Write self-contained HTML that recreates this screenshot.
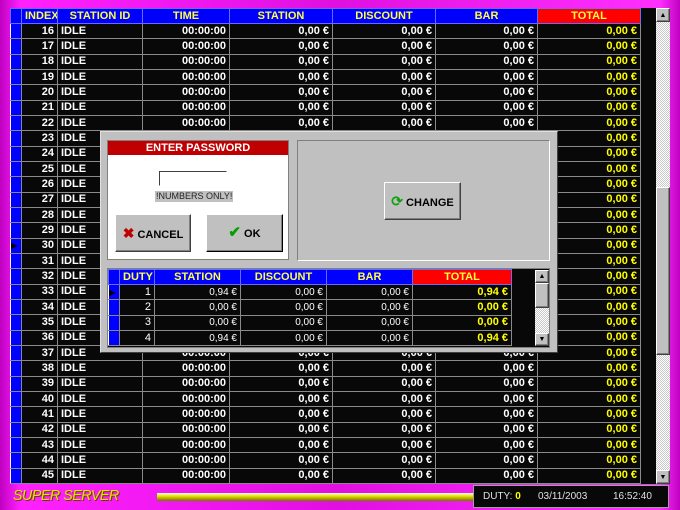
<!DOCTYPE html>
<html><head><meta charset="utf-8"><style>
*{margin:0;padding:0;box-sizing:border-box}
body{width:680px;height:510px;overflow:hidden;position:relative;font-family:"Liberation Sans",Arial,sans-serif;
background:linear-gradient(90deg,#c000c0,#ff20ff 3%,#e010e0 50%,#ff30ff 97%,#c000c0)}
#grid{position:absolute;left:10px;top:8px;width:646px;height:476px;background:#080808}
table{border-collapse:collapse;table-layout:fixed;position:absolute;left:0;top:0}
td{border:1px solid #8a8a8a;color:#fff;font-weight:bold;font-size:11px;text-align:right;padding:0 3px;height:15.33px;line-height:13px;white-space:nowrap;overflow:hidden}
tr.h td{background:#0000ff;color:#ffff40;text-align:center;height:15px;border-color:#6a6aff}
tr.h td.t{background:#ff0000}
td.i{background:#0000ff;border-color:#fff #888 #888 #fff;padding:0}
td.y{color:#ffff00}
td.l{text-align:left}
#sb{position:absolute;left:656px;top:8px;width:14px;height:476px;background:repeating-conic-gradient(#fff 0 25%,#c8c8c8 0 50%) 0 0/2px 2px}
.btn{position:absolute;background:#c0c0c0;border:1px solid;border-color:#fff #404040 #404040 #fff;box-shadow:inset -1px -1px #808080}
.arr{font-size:7px;text-align:center;line-height:13px;color:#000}
#dlg{position:absolute;left:100px;top:131px;width:458px;height:222px;background:#c0c0c0;border:1px solid;border-color:#e0e0e0 #404040 #404040 #e0e0e0}
#bot{position:absolute;left:0;top:484px;width:680px;height:26px}
</style></head><body>
<div id="grid">
<table style="width:630px">
<colgroup><col style="width:11px"><col style="width:36px"><col style="width:85px"><col style="width:87px"><col style="width:103px"><col style="width:103px"><col style="width:102px"><col style="width:103px"></colgroup>
<tr class="h"><td class="i" style="background:#0000ff"></td><td>INDEX</td><td>STATION ID</td><td>TIME</td><td>STATION</td><td>DISCOUNT</td><td>BAR</td><td class="t">TOTAL</td></tr>
<tr><td class="i"></td><td>16</td><td class="l">IDLE</td><td>00:00:00</td><td>0,00 €</td><td>0,00 €</td><td>0,00 €</td><td class="y">0,00 €</td></tr>
<tr><td class="i"></td><td>17</td><td class="l">IDLE</td><td>00:00:00</td><td>0,00 €</td><td>0,00 €</td><td>0,00 €</td><td class="y">0,00 €</td></tr>
<tr><td class="i"></td><td>18</td><td class="l">IDLE</td><td>00:00:00</td><td>0,00 €</td><td>0,00 €</td><td>0,00 €</td><td class="y">0,00 €</td></tr>
<tr><td class="i"></td><td>19</td><td class="l">IDLE</td><td>00:00:00</td><td>0,00 €</td><td>0,00 €</td><td>0,00 €</td><td class="y">0,00 €</td></tr>
<tr><td class="i"></td><td>20</td><td class="l">IDLE</td><td>00:00:00</td><td>0,00 €</td><td>0,00 €</td><td>0,00 €</td><td class="y">0,00 €</td></tr>
<tr><td class="i"></td><td>21</td><td class="l">IDLE</td><td>00:00:00</td><td>0,00 €</td><td>0,00 €</td><td>0,00 €</td><td class="y">0,00 €</td></tr>
<tr><td class="i"></td><td>22</td><td class="l">IDLE</td><td>00:00:00</td><td>0,00 €</td><td>0,00 €</td><td>0,00 €</td><td class="y">0,00 €</td></tr>
<tr><td class="i"></td><td>23</td><td class="l">IDLE</td><td>00:00:00</td><td>0,00 €</td><td>0,00 €</td><td>0,00 €</td><td class="y">0,00 €</td></tr>
<tr><td class="i"></td><td>24</td><td class="l">IDLE</td><td>00:00:00</td><td>0,00 €</td><td>0,00 €</td><td>0,00 €</td><td class="y">0,00 €</td></tr>
<tr><td class="i"></td><td>25</td><td class="l">IDLE</td><td>00:00:00</td><td>0,00 €</td><td>0,00 €</td><td>0,00 €</td><td class="y">0,00 €</td></tr>
<tr><td class="i"></td><td>26</td><td class="l">IDLE</td><td>00:00:00</td><td>0,00 €</td><td>0,00 €</td><td>0,00 €</td><td class="y">0,00 €</td></tr>
<tr><td class="i"></td><td>27</td><td class="l">IDLE</td><td>00:00:00</td><td>0,00 €</td><td>0,00 €</td><td>0,00 €</td><td class="y">0,00 €</td></tr>
<tr><td class="i"></td><td>28</td><td class="l">IDLE</td><td>00:00:00</td><td>0,00 €</td><td>0,00 €</td><td>0,00 €</td><td class="y">0,00 €</td></tr>
<tr><td class="i"></td><td>29</td><td class="l">IDLE</td><td>00:00:00</td><td>0,00 €</td><td>0,00 €</td><td>0,00 €</td><td class="y">0,00 €</td></tr>
<tr><td class="i" style="font-size:8px;color:#000;text-align:left">▶</td><td>30</td><td class="l">IDLE</td><td>00:00:00</td><td>0,00 €</td><td>0,00 €</td><td>0,00 €</td><td class="y">0,00 €</td></tr>
<tr><td class="i"></td><td>31</td><td class="l">IDLE</td><td>00:00:00</td><td>0,00 €</td><td>0,00 €</td><td>0,00 €</td><td class="y">0,00 €</td></tr>
<tr><td class="i"></td><td>32</td><td class="l">IDLE</td><td>00:00:00</td><td>0,00 €</td><td>0,00 €</td><td>0,00 €</td><td class="y">0,00 €</td></tr>
<tr><td class="i"></td><td>33</td><td class="l">IDLE</td><td>00:00:00</td><td>0,00 €</td><td>0,00 €</td><td>0,00 €</td><td class="y">0,00 €</td></tr>
<tr><td class="i"></td><td>34</td><td class="l">IDLE</td><td>00:00:00</td><td>0,00 €</td><td>0,00 €</td><td>0,00 €</td><td class="y">0,00 €</td></tr>
<tr><td class="i"></td><td>35</td><td class="l">IDLE</td><td>00:00:00</td><td>0,00 €</td><td>0,00 €</td><td>0,00 €</td><td class="y">0,00 €</td></tr>
<tr><td class="i"></td><td>36</td><td class="l">IDLE</td><td>00:00:00</td><td>0,00 €</td><td>0,00 €</td><td>0,00 €</td><td class="y">0,00 €</td></tr>
<tr><td class="i"></td><td>37</td><td class="l">IDLE</td><td>00:00:00</td><td>0,00 €</td><td>0,00 €</td><td>0,00 €</td><td class="y">0,00 €</td></tr>
<tr><td class="i"></td><td>38</td><td class="l">IDLE</td><td>00:00:00</td><td>0,00 €</td><td>0,00 €</td><td>0,00 €</td><td class="y">0,00 €</td></tr>
<tr><td class="i"></td><td>39</td><td class="l">IDLE</td><td>00:00:00</td><td>0,00 €</td><td>0,00 €</td><td>0,00 €</td><td class="y">0,00 €</td></tr>
<tr><td class="i"></td><td>40</td><td class="l">IDLE</td><td>00:00:00</td><td>0,00 €</td><td>0,00 €</td><td>0,00 €</td><td class="y">0,00 €</td></tr>
<tr><td class="i"></td><td>41</td><td class="l">IDLE</td><td>00:00:00</td><td>0,00 €</td><td>0,00 €</td><td>0,00 €</td><td class="y">0,00 €</td></tr>
<tr><td class="i"></td><td>42</td><td class="l">IDLE</td><td>00:00:00</td><td>0,00 €</td><td>0,00 €</td><td>0,00 €</td><td class="y">0,00 €</td></tr>
<tr><td class="i"></td><td>43</td><td class="l">IDLE</td><td>00:00:00</td><td>0,00 €</td><td>0,00 €</td><td>0,00 €</td><td class="y">0,00 €</td></tr>
<tr><td class="i"></td><td>44</td><td class="l">IDLE</td><td>00:00:00</td><td>0,00 €</td><td>0,00 €</td><td>0,00 €</td><td class="y">0,00 €</td></tr>
<tr><td class="i"></td><td>45</td><td class="l">IDLE</td><td>00:00:00</td><td>0,00 €</td><td>0,00 €</td><td>0,00 €</td><td class="y">0,00 €</td></tr>
</table>
</div>
<div id="sb">
<div class="btn arr" style="left:0;top:0;width:14px;height:14px">▲</div>
<div class="btn" style="left:0;top:179px;width:14px;height:168px"></div>
<div class="btn arr" style="left:0;top:462px;width:14px;height:14px">▼</div>
</div>

<div id="dlg">
 <div style="position:absolute;left:6px;top:8px;width:182px;height:120px;background:#fff;border:1px solid #808080">
  <div style="height:14px;background:#c00000;color:#fff;font-weight:bold;font-size:11px;text-align:center;line-height:14px">ENTER PASSWORD</div>
  <div style="position:absolute;left:51px;top:30px;width:68px;height:15px;border:1px solid;border-color:#404040 #fff #fff #404040;background:#fff"></div>
  <div style="position:absolute;left:47px;top:50px;background:#c0c0c0;font-size:9px;color:#222;padding:0 1px;line-height:11px">!NUMBERS ONLY!</div>
  <div class="btn" style="left:7px;top:73px;width:76px;height:38px;font-size:11px;font-weight:bold;line-height:36px;text-align:center"><span style="color:#c00000;font-size:14px">✖</span> CANCEL</div>
  <div class="btn" style="left:98px;top:73px;width:77px;height:38px;font-size:11px;font-weight:bold;line-height:36px;text-align:center;border-color:#fff #000 #000 #fff"><span style="color:#00a000;font-size:15px">✔</span> OK</div>
 </div>
 <div style="position:absolute;left:196px;top:8px;width:253px;height:121px;border:1px solid;border-color:#808080 #fff #fff #808080">
  <div class="btn" style="left:86px;top:41px;width:77px;height:38px;font-size:11px;font-weight:bold;line-height:36px;text-align:center"><span style="color:#10a010;font-size:14px">⟳</span> CHANGE</div>
 </div>
 <div style="position:absolute;left:6px;top:136px;width:443px;height:80px;background:#080808;border:1px solid #808080">
  <table style="width:403px">
  <colgroup><col style="width:11px"><col style="width:35px"><col style="width:86px"><col style="width:86px"><col style="width:86px"><col style="width:99px"></colgroup>
  <tr class="h"><td class="i" style="background:#0000ff"></td><td>DUTY</td><td>STATION</td><td>DISCOUNT</td><td>BAR</td><td class="t">TOTAL</td></tr>
  <tr><td class="i" style="font-size:8px;color:#000;text-align:left">▶</td><td style="font-weight:normal">1</td><td style="font-weight:normal;font-size:10px">0,94 €</td><td style="font-weight:normal;font-size:10px">0,00 €</td><td style="font-weight:normal;font-size:10px">0,00 €</td><td class="y">0,94 €</td></tr>
  <tr><td class="i"></td><td style="font-weight:normal">2</td><td style="font-weight:normal;font-size:10px">0,00 €</td><td style="font-weight:normal;font-size:10px">0,00 €</td><td style="font-weight:normal;font-size:10px">0,00 €</td><td class="y">0,00 €</td></tr>
  <tr><td class="i"></td><td style="font-weight:normal">3</td><td style="font-weight:normal;font-size:10px">0,00 €</td><td style="font-weight:normal;font-size:10px">0,00 €</td><td style="font-weight:normal;font-size:10px">0,00 €</td><td class="y">0,00 €</td></tr>
  <tr><td class="i"></td><td style="font-weight:normal">4</td><td style="font-weight:normal;font-size:10px">0,94 €</td><td style="font-weight:normal;font-size:10px">0,00 €</td><td style="font-weight:normal;font-size:10px">0,00 €</td><td class="y">0,94 €</td></tr>
  </table>
  <div style="position:absolute;left:427px;top:1px;width:14px;height:76px;background:repeating-conic-gradient(#fff 0 25%,#c8c8c8 0 50%) 0 0/2px 2px">
   <div class="btn arr" style="left:0;top:0;width:14px;height:13px;line-height:11px">▲</div>
   <div class="btn" style="left:0;top:13px;width:14px;height:25px"></div>
   <div class="btn arr" style="left:0;top:63px;width:14px;height:13px;line-height:11px">▼</div>
  </div>
 </div>
</div>

<div id="bot">
 <div style="position:absolute;left:13px;top:3px;font-style:italic;font-size:15px;color:#e8e000;text-shadow:1px 1px #604000;letter-spacing:-0.5px;transform:scaleX(0.95);transform-origin:left">SUPER SERVER</div>
 <div style="position:absolute;left:157px;top:9px;width:318px;height:8px;background:linear-gradient(#fffff0,#e8e000 40%,#707000)"></div>
 <div style="position:absolute;left:473px;top:1px;width:196px;height:23px;background:#080808;border:1px solid #a0a0a0;color:#e0e0e0;font-size:10px;line-height:21px">
  <span style="position:absolute;left:9px">DUTY: <b style="color:#ffff00">0</b></span>
  <span style="position:absolute;left:64px">03/11/2003</span>
  <span style="position:absolute;left:139px">16:52:40</span>
 </div>
</div>
</body></html>
